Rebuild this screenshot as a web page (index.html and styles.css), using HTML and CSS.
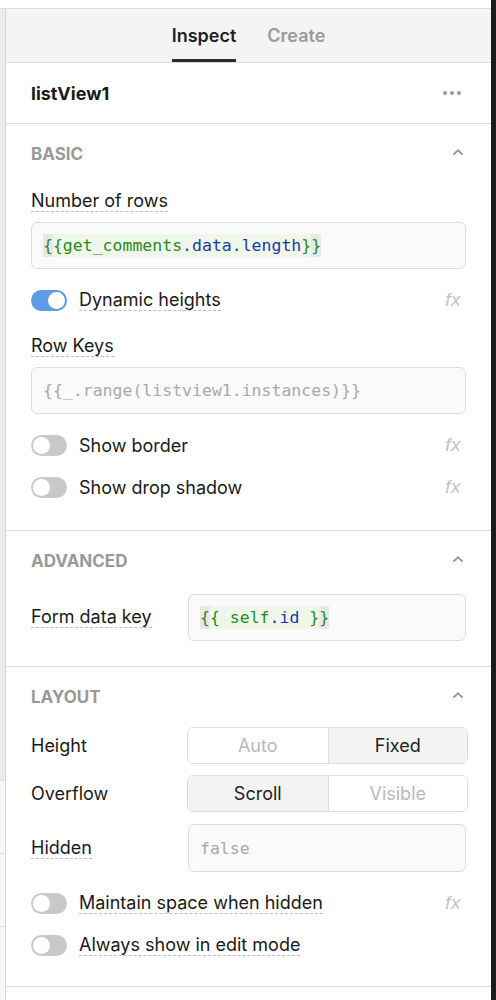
FILE: index.html
```html
<!DOCTYPE html>
<html>
<head>
<meta charset="utf-8">
<link rel="stylesheet" href="styles.css">
</head>
<body>
<div class="app">
  <div class="main">
    <div class="topgap"></div>
    <div class="body">
      <div class="side">
        <div class="side-a"></div>
        <div class="side-b"></div>
        <div class="side-b"></div>
        <div class="side-c"></div>
      </div>
      <div class="panel">
        <nav class="tabs">
          <span class="tab active">Inspect</span>
          <span class="tab">Create</span>
        </nav>
        <header class="comp-head">
          <h1>listView1</h1>
          <svg class="dots" width="18" height="4" viewBox="0 0 18 4"><circle cx="2" cy="2" r="2"/><circle cx="9" cy="2" r="2"/><circle cx="16" cy="2" r="2"/></svg>
        </header>

        <section class="sec sec-basic">
          <div class="sec-head">
            <h2>BASIC</h2>
            <svg class="chev" width="10" height="6" viewBox="0 0 10 6"><polyline points="1,5 5,1.2 9,5"/></svg>
          </div>
          <div class="field first">
            <div class="field-label"><span class="dash">Number of rows</span></div>
            <div class="input code"><span class="tok hg g">{</span><span class="tok hl"><span class="g">{get_comments</span><span class="b">.data.length</span><span class="g">}</span></span><span class="tok hg g">}</span></div>
          </div>
          <div class="toggle-row">
            <span class="toggle on"></span>
            <span class="dash">Dynamic heights</span>
            <span class="fx">fx</span>
          </div>
          <div class="field rowkeys">
            <div class="field-label"><span class="dash">Row Keys</span></div>
            <div class="input ph">{{_.range(listview1.instances)}}</div>
          </div>
          <div class="toggle-row">
            <span class="toggle"></span>
            <span>Show border</span>
            <span class="fx">fx</span>
          </div>
          <div class="toggle-row">
            <span class="toggle"></span>
            <span>Show drop shadow</span>
            <span class="fx">fx</span>
          </div>
        </section>

        <section class="sec sec-adv">
          <div class="sec-head">
            <h2>ADVANCED</h2>
            <svg class="chev" width="10" height="6" viewBox="0 0 10 6"><polyline points="1,5 5,1.2 9,5"/></svg>
          </div>
          <div class="grid-row adv-row">
            <div class="grid-label"><span class="dash">Form data key</span></div>
            <div class="input code"><span class="tok hg g">{</span><span class="tok hl"><span class="g">{ self</span><span class="b">.id</span><span class="g"> }</span></span><span class="tok hg g">}</span></div>
          </div>
        </section>

        <section class="sec sec-layout">
          <div class="sec-head">
            <h2>LAYOUT</h2>
            <svg class="chev" width="10" height="6" viewBox="0 0 10 6"><polyline points="1,5 5,1.2 9,5"/></svg>
          </div>
          <div class="grid-row seg-row1">
            <div class="grid-label"><span>Height</span></div>
            <div class="seg"><span>Auto</span><span class="on">Fixed</span></div>
          </div>
          <div class="grid-row seg-row2">
            <div class="grid-label"><span>Overflow</span></div>
            <div class="seg"><span class="on">Scroll</span><span>Visible</span></div>
          </div>
          <div class="grid-row hidden-row">
            <div class="grid-label"><span class="dash">Hidden</span></div>
            <div class="input ph tall">false</div>
          </div>
          <div class="toggle-row">
            <span class="toggle"></span>
            <span class="dash">Maintain space when hidden</span>
            <span class="fx">fx</span>
          </div>
          <div class="toggle-row">
            <span class="toggle"></span>
            <span class="dash">Always show in edit mode</span>
          </div>
        </section>
      </div>
    </div>
  </div>
  <div class="dark"></div>
</div>
</body>
</html>
```

FILE: styles.css
```css
html, body {
  margin: 0;
  padding: 0;
}
body {
  width: 496px;
  height: 1000px;
  overflow: hidden;
  background: #fff;
  font-family: Inter, "Noto Sans", sans-serif;
  color: #1a1a1a;
}
.app {
  display: flex;
  height: 1000px;
}
.main {
  flex: 1;
  display: flex;
  flex-direction: column;
  min-width: 0;
}
.topgap {
  flex: none;
  height: 8px;
  background: #fff;
  border-bottom: 1px solid #dcdcdc;
}
.body {
  flex: 1;
  display: flex;
}
.side {
  flex: none;
  width: 5px;
  border-right: 1px solid #d6d6d6;
  display: flex;
  flex-direction: column;
}
.side-a {
  height: 771px;
  background: #ebebeb;
}
.side-b {
  height: 72px;
  border-top: 1px solid #dcdcdc;
  background: #f7f7f7;
}
.side-c {
  flex: 1;
  border-top: 1px solid #dcdcdc;
  background: #f7f7f7;
}
.panel {
  flex: 1;
  display: flex;
  flex-direction: column;
  background: #fff;
}
.dark {
  flex: none;
  width: 5px;
  background: #1b1b1b;
}

/* tabs */
.tabs {
  height: 53px;
  background: #f4f4f4;
  border-bottom: 1px solid #dcdcdc;
  display: flex;
  justify-content: center;
  gap: 31px;
}
.tab {
  box-sizing: border-box;
  height: 53px;
  padding-top: 3px;
  border-bottom: 3px solid transparent;
  display: flex;
  align-items: center;
  font-size: 18px;
  font-weight: 600;
  color: #9a9a9a;
}
.tab.active {
  color: #1f1f1f;
  border-bottom-color: #2b2b2b;
}

/* component header */
.comp-head {
  height: 60px;
  border-bottom: 1px solid #dcdcdc;
  display: flex;
  align-items: center;
  justify-content: space-between;
  padding: 0 30px 0 25px;
}
.comp-head h1 {
  margin: 0;
  font-size: 18px;
  font-weight: 700;
}
.dots {
  fill: #9a9a9a;
}

/* sections */
.sec {
  border-bottom: 1px solid #dcdcdc;
  padding: 0 25px 22px;
}
.sec-adv {
  padding-bottom: 25px;
}
.sec-layout {
  padding-bottom: 20px;
}
.sec-head {
  height: 59px;
  display: flex;
  align-items: center;
  justify-content: space-between;
}
.sec-head h2 {
  margin: 0;
  font-size: 17px;
  font-weight: 700;
  color: #999;
}
.chev {
  margin-right: 3px;
  margin-top: -4px;
}
.chev polyline {
  fill: none;
  stroke: #9d9d9d;
  stroke-width: 2;
  stroke-linecap: round;
  stroke-linejoin: round;
}

.dash {
  display: inline-block;
  line-height: 20px;
  border-bottom: 1px dashed #bdbdbd;
}

.field-label {
  display: flex;
  margin-top: 8px;
  font-size: 18px;
  line-height: 20px;
}
.rowkeys {
  margin-top: 15px;
}

.input {
  box-sizing: border-box;
  height: 47px;
  margin-top: 10px;
  border: 1px solid #dcdcdc;
  border-radius: 6px;
  background: #fafafa;
  display: flex;
  align-items: center;
  padding: 0 11px;
  font-family: "DejaVu Sans Mono", "Liberation Mono", monospace;
  font-size: 16.5px;
  white-space: pre;
}
.input.ph {
  color: #a9a9a9;
}
.input.tall {
  height: 48px;
}
.tok {
  display: inline-block;
  line-height: 23px;
}
.hg {
  background: #e8e8e8;
}
.hl {
  background: #eef7ea;
}
.g {
  color: #2b8a22;
}
.b {
  color: #1d3a9e;
}

/* toggles */
.toggle-row {
  height: 42px;
  margin-top: 10px;
  display: flex;
  align-items: center;
  font-size: 18px;
}
.toggle-row + .toggle-row {
  margin-top: 0;
}
.toggle {
  flex: none;
  position: relative;
  width: 36px;
  height: 21px;
  border-radius: 11px;
  background: #c9c9c9;
  margin-right: 12px;
}
.toggle::after {
  content: "";
  position: absolute;
  left: 2px;
  top: 2px;
  width: 17px;
  height: 17px;
  border-radius: 50%;
  background: #fff;
}
.toggle.on {
  background: #5b9be8;
}
.toggle.on::after {
  left: 17px;
}
.fx {
  margin-left: auto;
  margin-right: 5px;
  font-family: "Liberation Sans", sans-serif;
  font-style: italic;
  font-size: 19px;
  color: #c3c3c3;
  letter-spacing: 0.5px;
}

/* grid rows */
.grid-row {
  display: grid;
  grid-template-columns: 157px 1fr;
  align-items: center;
  font-size: 18px;
}
.grid-row .input {
  margin-top: 0;
}
.grid-label {
  display: flex;
  line-height: 20px;
}
.adv-row {
  margin-top: 4px;
}
.seg-row1 {
  margin-top: 1px;
}
.seg-row2 {
  margin-top: 11px;
}
.hidden-row {
  margin-top: 12px;
}
.seg {
  box-sizing: border-box;
  height: 37px;
  margin: 0 -2px 0 -1px;
  border: 1px solid #dcdcdc;
  border-radius: 6px;
  overflow: hidden;
  display: grid;
  grid-template-columns: 1fr 1fr;
}
.seg span {
  display: flex;
  align-items: center;
  justify-content: center;
  color: #b9b9b9;
  background: #fff;
}
.seg span + span {
  border-left: 1px solid #dcdcdc;
}
.seg span.on {
  background: #f3f3f3;
  color: #222;
}
```
